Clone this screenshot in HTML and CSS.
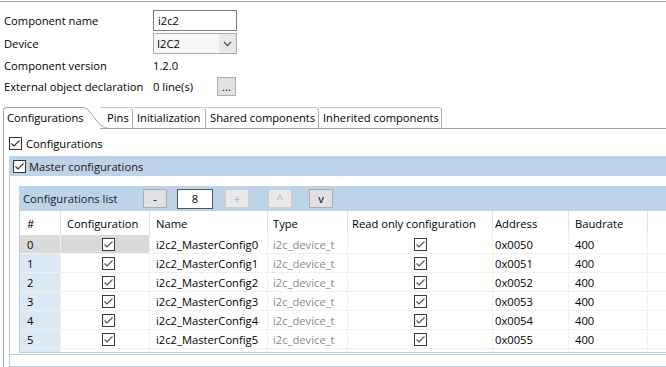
FILE: index.html
```html
<!doctype html>
<html>
<head>
<meta charset="utf-8" />
<title>i2c2 component</title>
<link rel="stylesheet" href="styles.css">
</head>
<body>

<div class="topline"></div>

<div class="form">
  <div class="form-label">Component name</div>
  <input class="field" value="i2c2">

  <div class="form-label">Device</div>
  <div class="select">
    <span class="select-text">I2C2</span>
    <span class="select-arrow">
      <svg width="9" height="6" viewBox="0 0 9 6"><polyline points="1,1 4.5,4.5 8,1" fill="none" stroke="#555" stroke-width="1.3"/></svg>
    </span>
  </div>

  <div class="form-label">Component version</div>
  <div class="form-value">1.2.0</div>

  <div class="form-label">External object declaration</div>
  <div class="ext">
    <span>0 line(s)</span>
    <button class="btn btn--dots">...</button>
  </div>
</div>

<div class="tabs">
  <div class="tab tab--active">Configurations</div>
  <svg class="tab-curve" width="26" height="22" viewBox="0 0 26 22"><path d="M0 0.5 C 9 0.5, 13 21.5, 26 21.5" fill="none" stroke="#a0a0a0"/></svg>
  <div class="tab tab--pins">Pins</div>
  <div class="tab tab--init">Initialization</div>
  <div class="tab tab--shared">Shared components</div>
  <div class="tab tab--inherited">Inherited components</div>
  <div class="tabs-fill"></div>
</div>

<div class="panel">
  <div class="cb-row">
    <svg class="check" width="13" height="13" viewBox="0 0 13 13"><rect x="0.5" y="0.5" width="12" height="12" fill="#fff" stroke="#333"/><polyline points="2.5,6.5 5,9 10.5,3.5" fill="none" stroke="#333" stroke-width="1.2"/></svg>
    <span>Configurations</span>
  </div>

  <div class="section-bar">
    <svg class="check" width="13" height="13" viewBox="0 0 13 13"><rect x="0.5" y="0.5" width="12" height="12" fill="#fff" stroke="#333"/><polyline points="2.5,6.5 5,9 10.5,3.5" fill="none" stroke="#333" stroke-width="1.2"/></svg>
    <span>Master configurations</span>
  </div>

  <div class="section-body">
    <div class="list-bar">
      <span class="list-label">Configurations list</span>
      <button class="btn">-</button>
      <input class="count" value="8">
      <button class="btn btn--off btn--plus">+</button>
      <button class="btn btn--off btn--up">^</button>
      <button class="btn btn--down">v</button>
    </div>

    <div class="list">
      <div class="row row--head">
        <div class="cell c-num">#</div>
        <div class="cell c-conf">Configuration</div>
        <div class="cell c-name">Name</div>
        <div class="cell c-type">Type</div>
        <div class="cell c-ro">Read only configuration</div>
        <div class="cell c-addr">Address</div>
        <div class="cell c-baud">Baudrate</div>
        <div class="cell c-rest"></div>
      </div>
      <div id="rows"></div>
    </div>
  </div>
  <div class="section-next"></div>
</div>

<script>
var box = '<svg class="check" width="13" height="13" viewBox="0 0 13 13"><rect x="0.5" y="0.5" width="12" height="12" fill="#fff" stroke="#3a3a3a"/><polyline points="2.5,6.5 5,9 10.5,3.5" fill="none" stroke="#555" stroke-width="1.2"/></svg>';

var html = '';
// 6 full rows, the 7th is scrolled almost out of view (only the boxes peek in)
for (var i = 0; i < 7; i++) {
  var full = i < 6;
  html += '<div class="row' + (i === 0 ? ' row--sel' : '') + '">' +
    '<div class="cell c-num">' + (full ? i : '') + '</div>' +
    '<div class="cell c-conf">' + box + '</div>' +
    '<div class="cell c-name">' + (full ? 'i2c2_MasterConfig' + i : '') + '</div>' +
    '<div class="cell c-type">' + (full ? 'i2c_device_t' : '') + '</div>' +
    '<div class="cell c-ro">' + box + '</div>' +
    '<div class="cell c-addr">' + (full ? '0x005' + i : '') + '</div>' +
    '<div class="cell c-baud">' + (full ? '400' : '') + '</div>' +
    '<div class="cell c-rest"></div>' +
  '</div>';
}
document.getElementById('rows').innerHTML = html;
</script>

</body>
</html>
```

FILE: styles.css
```css
* { box-sizing: border-box; }

html, body {
  margin: 0;
  height: 367px;
  overflow: hidden;
}

body {
  font: 11.2px "Open Sans", sans-serif;
  color: #000;
  background: #fff;
}

.topline {
  height: 2px;
  border-bottom: 1px solid #a8a8a8;
}

/* ---- top form ---- */

.form {
  display: grid;
  grid-template-columns: 149px 84px;
  grid-template-rows: 21px 21px 19px 19px;
  row-gap: 2px;
  align-items: center;
  padding: 8px 0 0 4px;
}

.form-label { white-space: nowrap; }

.field {
  width: 84px;
  height: 21px;
  margin: 0;
  padding: 0 0 0 4px;
  border: 1px solid #7a7a7a;
  font: inherit;
  color: #000;
}

.select {
  display: flex;
  width: 84px;
  height: 21px;
  border: 1px solid #acacac;
  background: #f7f7f7;
}

.select-text {
  flex: 1;
  padding-left: 3px;
  line-height: 19px;
}

.select-arrow {
  display: flex;
  align-items: center;
  justify-content: center;
  width: 17px;
  background: #e8e8e8;
}

.ext {
  display: flex;
  justify-content: space-between;
  align-items: center;
  width: 83px;
}

.btn {
  width: 24px;
  height: 19px;
  margin: 0;
  padding: 0;
  border: 1px solid #adadad;
  background: #e1e1e1;
  font: 11.2px "Open Sans", sans-serif;
  line-height: 15px;
  color: #000;
}

.btn--dots {
  width: 19px;
  line-height: 13px;
}

.btn--off {
  border-color: #cccccc;
  background: #e9e9e9;
  color: #a6a6a6;
}

.btn--plus { margin-left: 12px; }
.btn--up { margin-left: 19px; }
.btn--down { margin-left: 17px; }

/* ---- tabs ---- */

.tabs {
  display: flex;
  height: 22px;
  margin: 11px 0 0 3px;
}

.tab {
  height: 22px;
  line-height: 20px;
  white-space: nowrap;
  border-top: 1px solid #c3c3c3;
  border-right: 1px solid #b0b0b0;
  border-bottom: 1px solid #a0a0a0;
  border-top-right-radius: 4px;
  padding-left: 4px;
}

.tab--active {
  width: 80px;
  padding-left: 3px;
  border: 1px solid #a0a0a0;
  border-right: 0;
  border-bottom: 0;
  border-radius: 4px 0 0 0;
  background: #fff;
}

.tab-curve {
  flex: none;
  margin-right: -9px;
  position: relative;
  z-index: 1;
}

.tab--pins { width: 33px; padding-left: 7px; }
.tab--init { width: 73px; }
.tab--shared { width: 113px; }
.tab--inherited { width: 123px; }

.tabs-fill {
  flex: 1;
  border-bottom: 1px solid #a0a0a0;
}

/* ---- panel ---- */

.panel {
  height: 238px;
  margin-left: 3px;
  padding: 6px 0 0 5px;
  border-left: 1px solid #a0a0a0;
}

.cb-row {
  display: flex;
  align-items: center;
  gap: 4px;
  height: 17px;
}

.check { flex: none; display: block; }

.section-bar {
  display: flex;
  align-items: center;
  gap: 3px;
  height: 20px;
  margin-top: 4px;
  padding-left: 4px;
  background: #bcd3ea;
  color: #1e1414;
}

.section-body {
  padding: 10px 0 1px 9px;
  border-left: 1px solid #b7cbe1;
  border-bottom: 1px solid #b7cbe1;
}

.section-next {
  height: 12px;
  border-left: 1px solid #b7cbe1;
  border-bottom: 1px solid #b7cbe1;
}

.list-bar {
  display: flex;
  align-items: center;
  height: 25px;
  padding-left: 4px;
  background: #bcd3ea;
  color: #141e2a;
}

.list-label { width: 120px; }

.count {
  width: 36px;
  height: 20px;
  margin: 0 0 0 10px;
  padding: 0;
  border: 1px solid #555;
  font: inherit;
  text-align: center;
  color: #000;
}

/* ---- table ---- */

.list {
  height: 142px;
  overflow: hidden;
  border-left: 1px solid #b7cbe1;
  border-bottom: 1px solid #b7cbe1;
}

.row {
  display: grid;
  grid-template-columns: 41px 89px 118px 80px 145px 76px 79px 1fr;
  height: 19px;
}

.row--head { height: 24px; }

.cell {
  display: flex;
  align-items: center;
  white-space: nowrap;
  overflow: hidden;
  padding-left: 5px;
  border-right: 1px solid #f0f0f0;
  border-bottom: 1px solid #f0f0f0;
}

.row--head .cell {
  border-right-color: #e3e3e3;
  border-bottom: 0;
}

.c-num { padding-left: 7px; }
.row .c-num { background: #dde8f5; }
.row--head .c-num { background: #fff; }
.row--sel .c-num, .row--sel .c-conf { background: #d9d9d9; }

.c-conf { padding-left: 6px; }
.row .c-conf, .row .c-ro { justify-content: center; }
.row--head .c-conf, .row--head .c-ro { justify-content: flex-start; }

.c-ro { padding: 0 4px; }
.row--head .c-ro { padding-left: 4px; }

.c-name { padding-left: 6px; }
.c-type { color: #8a8a8a; }
.row--head .c-type { color: #000; }

.c-addr { padding-left: 2px; }
.c-baud { padding-left: 6px; }
.c-rest { border-right: 0; }
```
